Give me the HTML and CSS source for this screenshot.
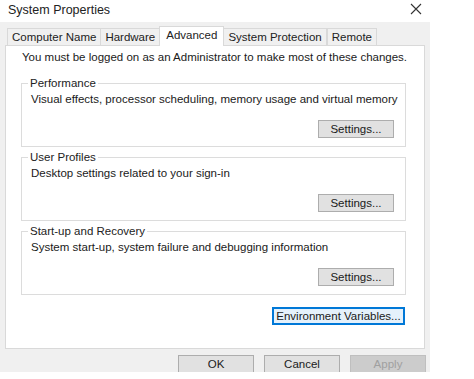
FILE: index.html
```html
<!DOCTYPE html>
<html lang="en">
<head>
    <meta charset="UTF-8">
    <title>System Properties</title>
    <link rel="stylesheet" href="styles.css">
</head>
<body>
    <div class="window">
        <div class="titlebar">
            <span class="title">System Properties</span>
            <span class="close">
                <svg width="12" height="12" viewBox="0 0 12 12"><path d="M1 1L11 11M11 1L1 11" stroke="#333" stroke-width="1.1" fill="none"/></svg>
            </span>
        </div>

        <div class="dialog">
            <div class="tabs">
                <div class="tab">Computer Name</div>
                <div class="tab">Hardware</div>
                <div class="tab active">Advanced</div>
                <div class="tab">System Protection</div>
                <div class="tab">Remote</div>
            </div>

            <div class="panel">
                <p class="notice">You must be logged on as an Administrator to make most of these changes.</p>

                <fieldset class="group">
                    <legend>Performance</legend>
                    <p>Visual effects, processor scheduling, memory usage and virtual memory</p>
                    <div class="row"><button class="btn">Settings...</button></div>
                </fieldset>

                <fieldset class="group">
                    <legend>User Profiles</legend>
                    <p>Desktop settings related to your sign-in</p>
                    <div class="row"><button class="btn">Settings...</button></div>
                </fieldset>

                <fieldset class="group">
                    <legend>Start-up and Recovery</legend>
                    <p>System start-up, system failure and debugging information</p>
                    <div class="row"><button class="btn">Settings...</button></div>
                </fieldset>

                <div class="env-row"><button class="btn env">Environment Variables...</button></div>
            </div>

            <div class="footer">
                <button class="btn">OK</button>
                <button class="btn">Cancel</button>
                <button class="btn disabled">Apply</button>
            </div>
        </div>
    </div>
</body>
</html>
```

FILE: styles.css
```css
* {
    margin: 0;
    padding: 0;
    box-sizing: border-box;
}

body {
    font-family: 'Liberation Sans', Arial, sans-serif;
    font-size: 11.5px;
    color: #1a1a1a;
    background: #fff;
}

.window {
    width: 430px;
}

.titlebar {
    height: 22px;
    display: flex;
    align-items: center;
    justify-content: space-between;
    padding: 0 8px 2px 8px;
    background: #fff;
}

.title {
    font-size: 12.5px;
    color: #222;
}

.close {
    display: flex;
    margin-top: -2px;
}

.dialog {
    background: #f0f0f0;
    height: 350px;
    padding: 4px 5px 0 5px;
}

/* tabs */
.tabs {
    display: flex;
    align-items: flex-end;
    height: 19px;
    padding-left: 2px;
}

.tab {
    height: 17px;
    padding: 1px 4px 0;
    line-height: 15px;
    border: 1px solid #d9d9d9;
    border-bottom: none;
    border-right: none;
    background: #f0f0f0;
    color: #222;
}

.tab:nth-child(4), .tab:last-child {
    border-right: 1px solid #d9d9d9;
}

.tab.active {
    height: 20px;
    margin: 0 -1px -1px 0;
    padding: 1px 6px 0;
    background: #fff;
    border: 1px solid #d9d9d9;
    border-bottom: none;
    position: relative;
    z-index: 1;
}

.panel {
    background: #fff;
    border: 1px solid #d9d9d9;
    height: 304px;
    padding: 5px 18px 0 15px;
    display: flex;
    flex-direction: column;
}

.notice {
    margin-left: 1px;
    margin-bottom: 14px;
    white-space: nowrap;
}

.group {
    min-width: 0;
    border: 1px solid #dcdcdc;
    padding: 0 11px 8px 9px;
    margin-bottom: 4px;
}

.group legend {
    margin-left: -3px;
    padding: 0 2px;
    color: #222;
}

.group p {
    margin-top: 4px;
    margin-bottom: 15px;
    white-space: nowrap;
}

.row {
    display: flex;
    justify-content: flex-end;
}

.btn {
    font-family: inherit;
    font-size: 11.5px;
    color: #1a1a1a;
    width: 76px;
    height: 18px;
    background: #e1e1e1;
    border: 1px solid #adadad;
}

.env-row {
    display: flex;
    justify-content: flex-end;
    margin-top: 8px;
    padding-right: 1px;
}

.btn.env {
    width: 133px;
    border: 2px solid #0078d7;
    background: #e5f1fb;
}

.footer {
    display: flex;
    justify-content: flex-end;
    gap: 10px;
    padding-top: 6px;
    margin-right: -1px;
}

.btn.disabled {
    color: #a0a0a0;
    background: #cccccc;
    border-color: #bfbfbf;
}
```
